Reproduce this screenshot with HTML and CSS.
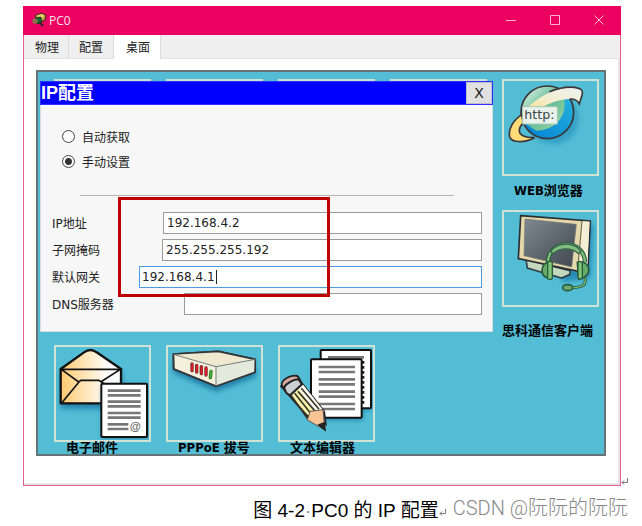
FILE: index.html
```html
<!DOCTYPE html>
<html lang="zh-CN">
<head>
  <meta charset="UTF-8">
  <title>PC0 的 IP 配置</title>
  <link rel="stylesheet" href="styles.css">
</head>
<body>
  <div class="figure">
    <div class="window">
      <div class="titlebar">
        <svg class="title-icon" width="15" height="15" viewBox="0 0 45 45">
          <path d="M10 7L28 1l14 5-3 15-14 7-12-5z" fill="#c5a13e" stroke="#3a3222" stroke-width="3"/>
          <path d="M16 9l18-3M17 14l18-4" stroke="#f2d67b" stroke-width="4"/>
          <path d="M8 16l18-4 3 15-14 6z" fill="#0b6b2c" stroke="#173c22" stroke-width="3"/>
          <circle cx="9" cy="24" r="8" fill="#8d704f"/>
          <path d="M23 29l10 10" stroke="#2f2429" stroke-width="6"/>
        </svg>
        <span class="title-text">PC0</span>
        <button class="win-btn" aria-label="最小化"><svg width="10" height="10"><path d="M0 5.5h10"/></svg></button>
        <button class="win-btn" aria-label="最大化"><svg width="10" height="10"><path d="M.5.5h9v9h-9z"/></svg></button>
        <button class="win-btn" aria-label="关闭"><svg width="10" height="10"><path d="M.5.5l9 9M9.5.5l-9 9"/></svg></button>
      </div>
      <div class="tabs">
        <button class="tab">物理</button>
        <button class="tab">配置</button>
        <button class="tab active">桌面</button>
      </div>
      <div class="tab-page">
        <div class="desktop">
          <div class="apps">
            <div class="app"><div class="app-icon"></div></div>
            <div class="app"><div class="app-icon"></div></div>
            <div class="app"><div class="app-icon"></div></div>
            <div class="app"><div class="app-icon"></div></div>
            <button class="app">
              <span class="app-icon">
                <svg viewBox="6 6 279 279">
                  <defs>
                    <linearGradient id="globe" x1="0" y1="0" x2="1" y2="1"><stop offset="0" stop-color="#eef6ee"/><stop offset=".5" stop-color="#5fbc96"/><stop offset="1" stop-color="#a5d9a5"/></linearGradient>
                    <linearGradient id="sea" x1="1" y1="0" x2="0" y2="1"><stop offset="0" stop-color="#2bb7de"/><stop offset="1" stop-color="#007fd0"/></linearGradient>
                    <linearGradient id="ring" x1="0" y1="1" x2="1" y2="0"><stop offset="0" stop-color="#ffd968"/><stop offset=".5" stop-color="#f4edcc"/><stop offset="1" stop-color="#eef4f2"/></linearGradient>
                    <filter id="soft" x="-20%" y="-20%" width="150%" height="150%"><feGaussianBlur stdDeviation="8"/></filter>
                  </defs>
                  <circle cx="154" cy="120" r="76" fill="#248fbd" opacity=".6" filter="url(#soft)"/>
                  <circle cx="136" cy="100" r="79" fill="url(#sea)"/>
                  <path d="M59 100C56 50 95 18 142 22c24 2 34 10 42 28 15 48-12 102-80 105-25-11-43-31-45-55z" fill="url(#globe)"/>
                  <circle cx="136" cy="100" r="79" fill="none" stroke="#3b3739" stroke-width="5"/>
                  <path d="M62 107C74 78 128 42 166 32c26-6 45-9 64-4 11 3 14 11 10 21l-8 26c-5-11-14-16-29-15-40 1-97 25-127 58z" fill="url(#ring)"/>
                  <path d="M142 38c29-11 64-17 88-10 11 3 13 11 10 21l-8 26c-5-11-14-16-29-15" fill="none" stroke="#3b3739" stroke-width="5"/>
                  <path d="M59 107C33 125 18 151 23 173c5 19 45 19 75 3-28 1-47-7-46-23 1-8 6-16 12-21z" fill="#ffdc79" stroke="#3b3739" stroke-width="5"/>
                  <path d="M62 83h104v52H62z" fill="#e9f2eb" stroke="#a7c7bb" stroke-width="3"/>
                  <text x="67" y="121" class="http-text">http:</text>
                </svg>
              </span>
              <span class="app-label web">WEB浏览器</span>
            </button>
            <button class="app app-client">
              <span class="app-icon">
                <svg viewBox="6 6 279 279">
                  <defs>
                    <linearGradient id="screen" x1="0" y1="0" x2="1" y2="1"><stop offset="0" stop-color="#7d8990"/><stop offset="1" stop-color="#41474e"/></linearGradient>
                  </defs>
                  <path d="M70 40l204 5-9 158-80 12z" fill="#1576aa" opacity=".7" filter="url(#soft)"/>
                  <path d="M72 148l132 34v11l-25 11-103-30z" fill="#c4d9bd" stroke="#33434b" stroke-width="5"/>
                  <path d="M56 17l209 16-8 157L49 146z" fill="#e5d8ab" stroke="#292e33" stroke-width="5"/>
                  <path d="M241 34l22 1-8 151-23-5z" fill="#f3efd5"/>
                  <path d="M69 27l154 16-14 128L66 137z" fill="url(#screen)" stroke="#777773" stroke-width="2"/>
                  <path d="M240 33l-13 145" stroke="#6b644d" stroke-width="3"/>
                  <path d="M138 162c-4-76 108-79 111-6" fill="none" stroke="#285a3e" stroke-width="13"/>
                  <path d="M138 162c-4-76 108-79 111-6" fill="none" stroke="#79bd78" stroke-width="7"/>
                  <path d="M146 124c22-28 70-29 91-1l-7 8c-23-19-54-19-77 0z" fill="#83bd7f" stroke="#326247" stroke-width="4"/>
                  <path d="M250 204c2 24-8 28-49 30" fill="none" stroke="#285a3e" stroke-width="9"/>
                  <path d="M250 204c2 24-8 28-49 30" fill="none" stroke="#79bd78" stroke-width="4"/>
                  <path d="M137 156c-20 9-24 39-2 47l12 3v-52zM245 157c20 9 21 33 0 46l-15 4-4-50z" fill="#66ad69" stroke="#285a3e" stroke-width="5"/>
                  <rect x="137" y="154" width="14" height="54" rx="5" fill="#82c678" stroke="#285a3e" stroke-width="4"/>
                  <rect x="228" y="155" width="13" height="52" rx="5" fill="#82c678" stroke="#285a3e" stroke-width="4"/>
                  <ellipse cx="197" cy="233" rx="15" ry="9" fill="#6ba86d" stroke="#285a3e" stroke-width="5"/>
                </svg>
              </span>
              <span class="app-label client">思科通信客户端</span>
            </button>
            <button class="app app-mail">
              <span class="app-icon">
                <svg viewBox="6 6 279 279">
                  <defs>
                    <linearGradient id="paper" x1="0" y1="0" x2="1" y2="0"><stop offset="0" stop-color="#ffc96f"/><stop offset=".8" stop-color="#fff"/></linearGradient>
                  </defs>
                  <path d="M20 80h185v112H20z" fill="#126f9d" opacity=".7" filter="url(#soft)"/>
                  <path d="M20 72L90 22q19-14 38 0l73 50v103H20z" fill="url(#paper)" stroke="#111" stroke-width="7" stroke-linejoin="round"/>
                  <path d="M22 73h177L141 110l-7-4H81l-7 5L22 73M75 111L23 174M141 110l29 18" fill="none" stroke="#111" stroke-width="5"/>
                  <path d="M144 121h140v160H144z" fill="#126f9d" opacity=".6" filter="url(#soft)"/>
                  <rect x="142" y="116" width="137" height="160" rx="3" fill="#fff" stroke="#111" stroke-width="6"/>
                  <path d="M161 137h99m-99 14h99m-99 19h99m-99 14h99m-99 20h99m-99 14h99m-99 20h62m-62 14h62" stroke="#777" stroke-width="8"/>
                  <text x="227" y="256" class="at-text">@</text>
                </svg>
              </span>
              <span class="app-label">电子邮件</span>
            </button>
            <button class="app">
              <span class="app-icon">
                <svg viewBox="6 6 279 279">
                  <path d="M22 50l128 55 119-42v32l-119 45L22 83z" fill="#126f9d" opacity=".8" filter="url(#soft)"/>
                  <path d="M22 27l135-8 111 24-1 39-117 42L23 72z" fill="#f4f0dc" stroke="#30363a" stroke-width="5" stroke-linejoin="round"/>
                  <path d="M22 27l135-8 111 24-118 22z" fill="#eee9cf"/>
                  <path d="M150 65l118-22-1 39-117 42z" fill="#e4eadb"/>
                  <path d="M22 27l135-8 111 24-1 39-117 42L23 72z" fill="none" stroke="#30363a" stroke-width="5" stroke-linejoin="round"/>
                  <path d="M22 28l128 37 118-22M150 65v58" fill="none" stroke="#777e80" stroke-width="3"/>
                  <path d="M78 57v20m14-16v20m14-16v21m14-17v21" stroke="#633234" stroke-width="10" stroke-linecap="round"/>
                  <path d="M79 57l-1 20m15-16l-1 20m15-16l-1 21m15-17l-1 21" stroke="#e11d25" stroke-width="6" stroke-linecap="round"/>
                  <path d="M135 79l-2 19" stroke="#26642d" stroke-width="10" stroke-linecap="round"/>
                  <path d="M135 79l-2 19" stroke="#42b52f" stroke-width="6" stroke-linecap="round"/>
                </svg>
              </span>
              <span class="app-label">PPPoE 拔号</span>
            </button>
            <button class="app">
              <span class="app-icon">
                <svg viewBox="6 6 279 279">
                  <path d="M107 53h174v140h-27v32H107z" fill="#126f9d" opacity=".8" filter="url(#soft)"/>
                  <rect x="128" y="15" width="151" height="175" rx="3" fill="#fff" stroke="#111" stroke-width="6"/>
                  <path d="M150 37h108" stroke="#777" stroke-width="8"/>
                  <path d="M254 48v128" stroke="#222" stroke-width="10" stroke-dasharray="8 7"/>
                  <rect x="99" y="43" width="152" height="175" rx="3" fill="#fff" stroke="#111" stroke-width="6"/>
                  <path d="M122 66h109m-109 15h109m-109 22h109m-109 15h109m-109 22h109m-109 15h109m-109 22h109m-109 15h109" stroke="#777" stroke-width="8"/>
                  <path d="M10 124l47-31 12 18 69 88 5 39-57-27z" fill="#f8f3a7" stroke="#222" stroke-width="6"/>
                  <path d="M69 111l69 88-20 9-66-91z" fill="#fffef1"/>
                  <path d="M12 122c-5-19 34-37 48-27l6 9-45 31z" fill="#d5aaa3" stroke="#222" stroke-width="5"/>
                  <path d="M18 127c8-12 30-25 44-24l10 15-34 31c-10 1-14-4-20-22z" fill="#ccd0d2" stroke="#222" stroke-width="6"/>
                  <path d="M39 151l52 73m-41-79l49 61m-39-67l50 58m-40-67l53 63" fill="none" stroke="#373632" stroke-width="5"/>
                  <path d="M96 199l39-5 6 61-53-30z" fill="#fac394" stroke="#555" stroke-width="3"/>
                  <path d="M118 239l22-9 4 30z" fill="#222"/>
                </svg>
              </span>
              <span class="app-label">文本编辑器</span>
            </button>
          </div>

          <form class="dialog">
            <div class="dialog-head">
              <h1>IP配置</h1>
              <button type="button" class="dialog-close">X</button>
            </div>
            <div class="dialog-body">
              <div class="modes">
                <label class="mode"><input type="radio" name="mode" value="dhcp"> 自动获取</label>
                <label class="mode"><input type="radio" name="mode" value="static" checked> 手动设置</label>
              </div>
              <hr>
              <div class="field">
                <label class="label-ip" for="ip">IP地址</label>
                <input type="text" id="ip" value="192.168.4.2">
              </div>
              <div class="field">
                <label class="label-mask" for="mask">子网掩码</label>
                <input type="text" id="mask" value="255.255.255.192">
              </div>
              <div class="field">
                <label class="label-gateway" for="gateway">默认网关</label>
                <input type="text" id="gateway" class="current" value="192.168.4.1">
              </div>
              <div class="field">
                <label class="label-dns" for="dns">DNS服务器</label>
                <input type="text" id="dns">
              </div>
            </div>
            <div class="highlight"></div>
          </form>
        </div>
      </div>
    </div>
    <svg class="mark" width="7" height="8" viewBox="0 0 7 8"><path d="M6.5 0v4.5H1M3 2.5l-2 2 2 2"/></svg>
  </div>

  <div class="caption">
    <p class="caption-text">图 4-2<span class="dot">·</span>PC0 的 IP 配置<svg class="mark" width="7" height="8" viewBox="0 0 7 8"><path d="M6.5 0v4.5H1M3 2.5l-2 2 2 2"/></svg></p>
    <p class="watermark">CSDN @阮阮的阮阮</p>
  </div>
</body>
</html>
```
FILE: styles.css
```css
* {
  box-sizing: border-box;
}
body {
  margin: 0;
  padding: 6px 14px 0 23px;
  background: #fff;
  color: #222;
  font-family: "DejaVu Sans", "Noto Sans CJK SC", sans-serif;
  font-size: 12px;
}
button {
  margin: 0;
  padding: 0;
  border: none;
  background: none;
  color: inherit;
  font: inherit;
}
.figure {
  display: flex;
  align-items: flex-end;
}
.mark {
  flex: none;
}
.mark path {
  fill: none;
  stroke: #777;
}

/* 窗口 */
.window {
  flex: 1;
  border: 1px solid #e85c98;
  border-top: none;
  background: #fff;
}
.titlebar {
  display: flex;
  align-items: center;
  height: 29px;
  margin: 0 -1px;
  padding-left: 9px;
  background: #ec0060;
  color: #ffe3ee;
}
.title-text {
  flex: 1;
  margin-left: 2px;
  font-family: "Open Sans", sans-serif;
}
.win-btn {
  width: 44px;
  height: 29px;
}
.win-btn path {
  fill: none;
  stroke: #ffb3d0;
}
.tabs {
  display: flex;
  height: 24px;
  padding-left: 1px;
  border-bottom: 1px solid #e2e2e2;
  background: #efefef;
}
.tab {
  height: 24px;
  padding: 0 10px 1px;
  border-right: 1px solid #dcdcdc;
}
.tab:first-child {
  padding-right: 9px;
}
.tab.active {
  padding: 0 10px 2px 12px;
  background: #fff;
}
.tab-page {
  padding: 11px 12px 27px;
  border-right: 2px solid #e6e6e9;
  border-bottom: 2px solid #e6e6e9;
}

/* 桌面 */
.desktop {
  position: relative;
  padding: 7px 5px 0 16px;
  border: 2px solid #667377;
  background: #53bdd5;
}
.apps {
  display: grid;
  grid-template-columns: repeat(5, 97px);
  grid-template-rows: 131px 135px 109px;
  justify-content: space-between;
}
.app {
  display: flex;
  flex-direction: column;
  align-items: flex-start;
  color: #000;
}
.app-client {
  grid-column: 5;
}
.app-mail {
  grid-column: 1;
}
.app-icon {
  width: 97px;
  height: 97px;
  border: 2px solid #cfe2d5;
}
.app-icon svg {
  display: block;
  width: 93px;
  height: 93px;
}
.app-label {
  padding-left: 12px;
  font-family: "DejaVu Sans Condensed", "DejaVu Sans", "Noto Sans CJK SC", sans-serif;
  font-size: 13px;
  font-weight: bold;
  line-height: 12px;
  white-space: nowrap;
}
.app-label.web {
  padding-top: 9px;
}
.app-label.client {
  padding: 18px 0 0;
}
.http-text {
  font: 38px "DejaVu Sans", sans-serif;
  fill: #3c4548;
}
.at-text {
  font: bold 34px "Liberation Sans", sans-serif;
  fill: #666;
}

/* IP 配置对话框 */
.dialog {
  position: absolute;
  top: 9px;
  left: 2px;
  right: 111px;
  border: 1px solid #d5dfe2;
  background: #f7f7f7;
}
.dialog-head {
  display: flex;
  justify-content: space-between;
  height: 24px;
  margin: -1px -1px 0;
  border: 1px solid #2f2fff;
  background: #0000ff;
}
h1 {
  margin: 0;
  color: #fff;
  font-family: "Liberation Sans", "Noto Sans CJK SC", sans-serif;
  font-size: 18px;
  line-height: 22px;
}
.dialog-close {
  width: 26px;
  border: 1px solid #bdbdcd;
  background: #e1e1e1;
  font-size: 14px;
}
.dialog-body {
  padding: 19px 10px 14px 11px;
}
.modes {
  margin-left: 10px;
}
.mode {
  display: flex;
  align-items: center;
  gap: 7px;
  height: 25px;
}
.mode input {
  appearance: none;
  width: 13px;
  height: 13px;
  margin: 0;
  border: 1px solid #444;
  border-radius: 50%;
  background: #fff;
}
.mode input:checked {
  background: radial-gradient(circle, #333 3px, #fff 4px);
}
hr {
  height: 1px;
  margin: 21px 28px 13px;
  border: none;
  background: #b5b5b5;
}
.field {
  display: flex;
  align-items: center;
  height: 27px;
}
.field input {
  flex: 1;
  min-width: 0;
  height: 22px;
  padding: 0 3px;
  border: 1px solid #9b9b9b;
  outline: none;
  background: #fff;
  color: #222;
  font: inherit;
}
/* 正在编辑的输入框，带静态光标 */
.field .current {
  padding-left: 2px;
  border-color: #4a9be0;
  background: linear-gradient(#222, #222) 76px center / 1px 14px no-repeat #fff;
}
.label-ip {
  width: 111px;
}
.label-mask {
  width: 110px;
}
.label-gateway {
  width: 87px;
}
.label-dns {
  width: 132px;
}
.highlight {
  position: absolute;
  top: 115px;
  left: 77px;
  width: 212px;
  height: 100px;
  border: 3px solid #c00000;
  pointer-events: none;
}

/* 图注 */
.caption {
  display: flex;
  justify-content: flex-end;
  gap: 7px;
  margin-top: 10px;
  font-family: "Liberation Sans", "Noto Sans CJK SC", sans-serif;
  line-height: 30px;
  white-space: nowrap;
}
.caption p {
  margin: 0;
}
.caption-text {
  color: #000;
  font-size: 19px;
}
.dot {
  color: #888;
}
.caption .watermark {
  color: #888;
  font-family: Roboto, "Noto Sans CJK SC", sans-serif;
  font-size: 20px;
  font-weight: 300;
  line-height: 24px;
}
```
